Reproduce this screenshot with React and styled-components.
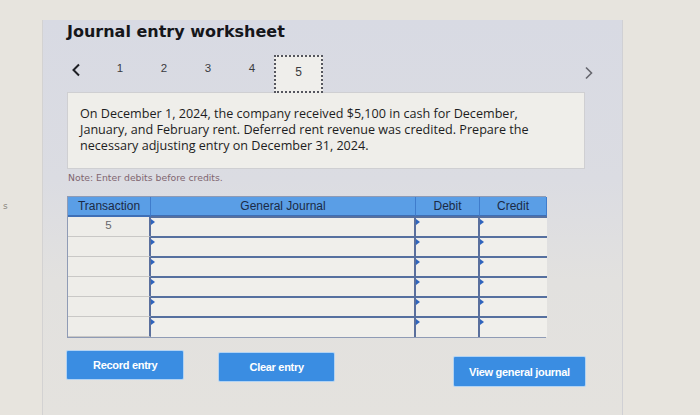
import React from 'react';
import styled, { createGlobalStyle } from 'styled-components';

const GlobalStyle = createGlobalStyle`
  html, body {
    margin: 0;
    padding: 0;
    background: #e7e4de;
    height: 100%;
    overflow: hidden;
  }
  #root { height: 100%; }
`;

const Page = styled.div`
  display: flex;
  height: 415px;
  padding-top: 20px;
  box-sizing: border-box;
`;

const Gutter = styled.div`
  width: 42px;
  flex-shrink: 0;
  padding-top: 181px;
  padding-left: 3px;
  box-sizing: border-box;
  font-family: 'DejaVu Sans', sans-serif;
  font-size: 9px;
  color: #8a8680;
`;

const Panel = styled.div`
  width: 581px;
  flex-shrink: 0;
  padding: 2px 37px 0 24px;
  box-sizing: border-box;
  background: linear-gradient(180deg, #d8dae3 0px, #dbdce2 160px, #e2e1df 260px, #e4e2de 100%);
  border-left: 1px solid #d3d2d2;
  border-right: 1px solid #d0d0d4;
`;

const Title = styled.h1`
  margin: 0;
  font-family: 'DejaVu Sans', Verdana, sans-serif;
  font-weight: bold;
  font-size: 16px;
  line-height: 20px;
  color: #15161a;
`;

const NavRow = styled.div`
  display: flex;
  align-items: flex-start;
  height: 37px;
  margin-top: 13px;
  font-family: 'Liberation Sans', Arial, sans-serif;
  font-size: 11.5px;
  color: #3a3a3e;
`;

const Chevron = styled.svg`
  display: block;
  flex-shrink: 0;
  margin-top: ${p => p.$top}px;
  margin-left: ${p => p.$left || 0}px;
  margin-right: ${p => p.$right || 0}px;
`;

const Step = styled.div`
  width: 44px;
  text-align: center;
  line-height: 14px;
  padding-top: 6px;
`;

const ActiveStep = styled.div`
  width: 49px;
  height: 38px;
  box-sizing: border-box;
  border: 2px dotted #55565e;
  background: #efeeeb;
  text-align: center;
  line-height: 14px;
  padding-top: 8px;
  position: relative;
  z-index: 1;
  font-size: 12px;
`;

const Spacer = styled.div`
  flex: 1;
`;

const Question = styled.div`
  background: #efeeea;
  border: 1px solid #cfcfd2;
  padding: 13px 12px 14px;
  font-family: 'Open Sans', sans-serif;
  font-size: 12.6px;
  line-height: 16px;
  color: #1d1d22;
`;

const Note = styled.div`
  margin-top: 3px;
  padding-left: 1px;
  font-family: 'DejaVu Sans', Verdana, sans-serif;
  font-size: 9.3px;
  line-height: 12px;
  color: #806670;
`;

const Table = styled.div`
  margin-top: 12px;
  display: grid;
  grid-template-columns: 83px 265px 64px 67px;
  grid-auto-rows: 20px;
  width: 479px;
  border: 1px solid #8f9bb5;
  box-sizing: border-box;
`;

const HeadCell = styled.div`
  background: #5a9ee6;
  border-right: 1px solid #3f7ccc;
  border-bottom: 2px solid #3e6fb6;
  display: flex;
  align-items: center;
  justify-content: center;
  font-family: 'Liberation Sans', Arial, sans-serif;
  font-size: 12px;
  color: #1b2a45;
  &:last-child { border-right: none; }
`;

const TxCell = styled.div`
  background: #eeede9;
  border-bottom: 1px solid #c9c8c6;
  border-right: 2px solid #5a6f9c;
  display: flex;
  justify-content: center;
  align-items: flex-start;
  padding-top: 2px;
  font-family: 'Liberation Sans', Arial, sans-serif;
  font-size: 11.5px;
  color: #66666c;
`;

const InputCell = styled.div`
  position: relative;
  background: #f0efeb;
  border-top: 2px solid #56709f;
  border-right: ${p => (p.$last ? 'none' : '2px solid #5a6f9c')};
  margin-top: -1px;

  &::before {
    content: '';
    position: absolute;
    left: 0;
    top: 1px;
    border-top: 3px solid transparent;
    border-bottom: 3px solid transparent;
    border-left: 4px solid #2f64bd;
  }
`;

const ButtonRow = styled.div`
  display: flex;
  align-items: flex-start;
  margin-top: 13px;
`;

const Button = styled.button`
  height: ${p => p.$h || 28}px;
  width: ${p => p.$w}px;
  margin-top: ${p => p.$top || 0}px;
  margin-left: ${p => p.$left || 0}px;
  background: #3a8de2;
  border: none;
  border-radius: 1px;
  box-shadow: 0 0 0 1px #b2d3f3;
  color: #fff;
  font-family: 'Liberation Sans', Arial, sans-serif;
  font-weight: bold;
  font-size: 11px;
  letter-spacing: -0.3px;
  padding: 0;
  cursor: pointer;
`;

const rows = ['5', '', '', '', '', ''];

export default function App() {
  return (
    <>
      <GlobalStyle />
      <Page>
        <Gutter>s</Gutter>
        <Panel>
          <Title>Journal entry worksheet</Title>
          <NavRow>
            <Chevron $top={8} $left={4} $right={17} width="10" height="14" viewBox="0 0 10 14">
              <polyline points="8,1.5 2.5,7 8,12.5" fill="none" stroke="#1e1f24" strokeWidth="2" />
            </Chevron>
            <Step>1</Step>
            <Step>2</Step>
            <Step>3</Step>
            <Step>4</Step>
            <ActiveStep>5</ActiveStep>
            <Spacer />
            <Chevron $top={11} $right={-9} width="10" height="14" viewBox="0 0 10 14">
              <polyline points="2,1.5 7.5,7 2,12.5" fill="none" stroke="#66676e" strokeWidth="1.6" />
            </Chevron>
          </NavRow>
          <Question>
            On December 1, 2024, the company received $5,100 in cash for December,
            <br />
            January, and February rent. Deferred rent revenue was credited. Prepare the
            <br />
            necessary adjusting entry on December 31, 2024.
          </Question>
          <Note>Note: Enter debits before credits.</Note>
          <Table>
            <HeadCell>Transaction</HeadCell>
            <HeadCell>General Journal</HeadCell>
            <HeadCell>Debit</HeadCell>
            <HeadCell>Credit</HeadCell>
            {rows.map((r, i) => (
              <React.Fragment key={i}>
                <TxCell>{r}</TxCell>
                <InputCell />
                <InputCell />
                <InputCell $last />
              </React.Fragment>
            ))}
          </Table>
          <ButtonRow>
            <Button $w={119}>Record entry</Button>
            <Button $w={117} $left={36} $top={2}>Clear entry</Button>
            <Button $w={134} $h={29} $left={120} $top={6}>View general journal</Button>
          </ButtonRow>
        </Panel>
      </Page>
    </>
  );
}
